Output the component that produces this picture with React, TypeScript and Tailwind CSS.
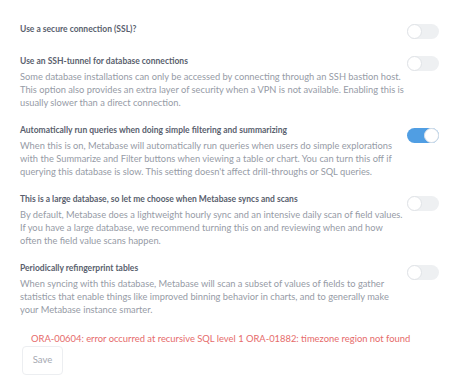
import { useState } from 'react'

type Field = { label: string; desc?: string; on: boolean; toggleTop: string }

const fields: Field[] = [
  { label: 'Use a secure connection (SSL)?', on: false, toggleTop: 'mt-0' },
  {
    label: 'Use an SSH-tunnel for database connections',
    desc: 'Some database installations can only be accessed by connecting through an SSH bastion host. This option also provides an extra layer of security when a VPN is not available. Enabling this is usually slower than a direct connection.',
    on: false,
    toggleTop: 'mt-0',
  },
  {
    label: 'Automatically run queries when doing simple filtering and summarizing',
    desc: "When this is on, Metabase will automatically run queries when users do simple explorations with the Summarize and Filter buttons when viewing a table or chart. You can turn this off if querying this database is slow. This setting doesn't affect drill-throughs or SQL queries.",
    on: true,
    toggleTop: 'mt-[3px]',
  },
  {
    label: 'This is a large database, so let me choose when Metabase syncs and scans',
    desc: 'By default, Metabase does a lightweight hourly sync and an intensive daily scan of field values. If you have a large database, we recommend turning this on and reviewing when and how often the field value scans happen.',
    on: false,
    toggleTop: 'mt-[2px]',
  },
  {
    label: 'Periodically refingerprint tables',
    desc: 'When syncing with this database, Metabase will scan a subset of values of fields to gather statistics that enable things like improved binning behavior in charts, and to generally make your Metabase instance smarter.',
    on: false,
    toggleTop: 'mt-[2px]',
  },
]

function Toggle({ on, onClick }: { on: boolean; onClick: () => void }) {
  return (
    <button
      onClick={onClick}
      className={`relative block h-[15px] w-[32px] shrink-0 rounded-full ${on ? 'bg-[#509ee3]' : 'bg-[#eef0f2]'}`}
    >
      <span
        className={`absolute top-0 h-[15px] w-[15px] rounded-full border border-[#e0e3e7] bg-white ${on ? 'right-0' : 'left-0'}`}
      />
    </button>
  )
}

export default function App() {
  const [vals, setVals] = useState(fields.map((f) => f.on))

  return (
    <div className="h-[380px] w-[474px] overflow-hidden bg-white pl-[20px] pt-[24px] font-['Lato',sans-serif]">
      {fields.map((f, i) => (
        <div key={f.label} className={`flex items-start ${f.desc ? 'mb-[16px]' : 'mb-[17px]'}`}>
          <div className="w-[386px]">
            <div className="text-[8.5px] font-bold leading-[11px] text-[#5a5f6e]">{f.label}</div>
            {f.desc && (
              <p className="mt-[3px] text-[9.3px] leading-[13px] text-[#969ba6]">{f.desc}</p>
            )}
          </div>
          <div className={`ml-[1px] flex ${f.toggleTop}`}>
            <Toggle on={vals[i]} onClick={() => setVals((v) => v.map((x, j) => (j === i ? !x : x)))} />
          </div>
        </div>
      ))}

      <div className="mt-[2px] pl-[11px] text-[9.4px] leading-[13px] whitespace-nowrap text-[#e66b6b]">
        ORA-00604: error occurred at recursive SQL level 1 ORA-01882: timezone region not found
      </div>
      <button className="ml-[2px] mt-[-1px] h-[29px] w-[41px] rounded-[4px] border border-[#eceef1] text-[9.5px] text-[#a4a8b1]">
        Save
      </button>
    </div>
  )
}
